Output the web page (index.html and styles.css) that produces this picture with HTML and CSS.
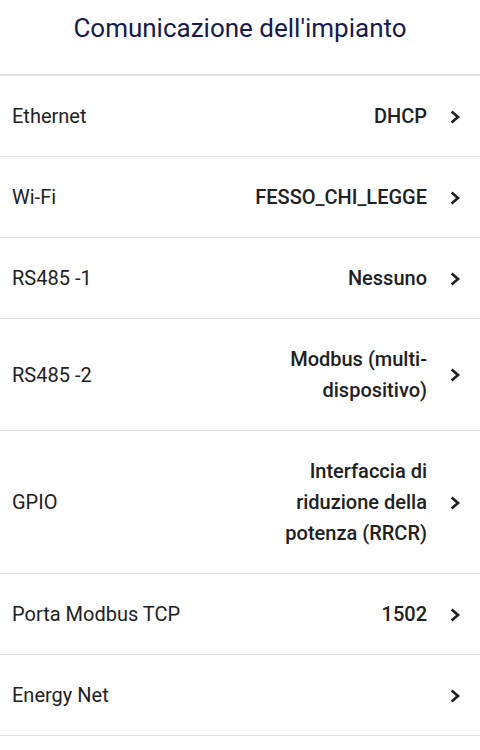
FILE: index.html
```html
<!DOCTYPE html>
<html lang="it">
<head>
<meta charset="UTF-8">
<meta name="viewport" content="width=device-width, initial-scale=1.0">
<title>Comunicazione dell'impianto</title>
<link rel="stylesheet" href="styles.css">
</head>
<body>
<div class="header">
    <h1>Comunicazione dell'impianto</h1>
</div>
<ul class="settings">
    <li class="row">
        <span class="label">Ethernet</span>
        <span class="value">DHCP</span>
        <svg class="chevron" viewBox="0 0 10 14"><polyline points="1.6,1.6 8,7 1.6,12.4"/></svg>
    </li>
    <li class="row">
        <span class="label">Wi-Fi</span>
        <span class="value">FESSO_CHI_LEGGE</span>
        <svg class="chevron" viewBox="0 0 10 14"><polyline points="1.6,1.6 8,7 1.6,12.4"/></svg>
    </li>
    <li class="row">
        <span class="label">RS485 -1</span>
        <span class="value">Nessuno</span>
        <svg class="chevron" viewBox="0 0 10 14"><polyline points="1.6,1.6 8,7 1.6,12.4"/></svg>
    </li>
    <li class="row">
        <span class="label">RS485 -2</span>
        <span class="value">Modbus (multi-dispositivo)</span>
        <svg class="chevron" viewBox="0 0 10 14"><polyline points="1.6,1.6 8,7 1.6,12.4"/></svg>
    </li>
    <li class="row">
        <span class="label">GPIO</span>
        <span class="value">Interfaccia di riduzione della potenza (RRCR)</span>
        <svg class="chevron" viewBox="0 0 10 14"><polyline points="1.6,1.6 8,7 1.6,12.4"/></svg>
    </li>
    <li class="row">
        <span class="label">Porta Modbus TCP</span>
        <span class="value">1502</span>
        <svg class="chevron" viewBox="0 0 10 14"><polyline points="1.6,1.6 8,7 1.6,12.4"/></svg>
    </li>
    <li class="row">
        <span class="label">Energy Net</span>
        <span class="value"></span>
        <svg class="chevron" viewBox="0 0 10 14"><polyline points="1.6,1.6 8,7 1.6,12.4"/></svg>
    </li>
</ul>
</body>
</html>
```

FILE: styles.css
```css
body, html {
    margin: 0;
    background: #fff;
    font-family: Roboto, "Noto Sans", Arial, sans-serif;
    color: #212121;
}
.header {
    box-sizing: border-box;
    height: 76px;
    padding-top: 11px;
    border-bottom: 2px solid #e0e0e0;
}
.header h1 {
    margin: 0;
    text-align: center;
    font-size: 26px;
    font-weight: 400;
    line-height: 34px;
    color: #161b4f;
}
.settings {
    list-style: none;
    margin: 0;
    padding: 0;
}
.row {
    display: flex;
    align-items: center;
    padding: 25px 20px 24px 12px;
    border-bottom: 1px solid #e2e2e2;
    font-size: 20px;
    line-height: 31px;
}
.label {
    flex: 1;
}
.value {
    max-width: 180px;
    text-align: right;
    font-weight: 500;
    margin-right: 23px;
}
.chevron {
    width: 10px;
    height: 14px;
    flex-shrink: 0;
    overflow: visible;
}
.chevron polyline {
    fill: none;
    stroke: #1f1f1f;
    stroke-width: 2.6;
}
```
